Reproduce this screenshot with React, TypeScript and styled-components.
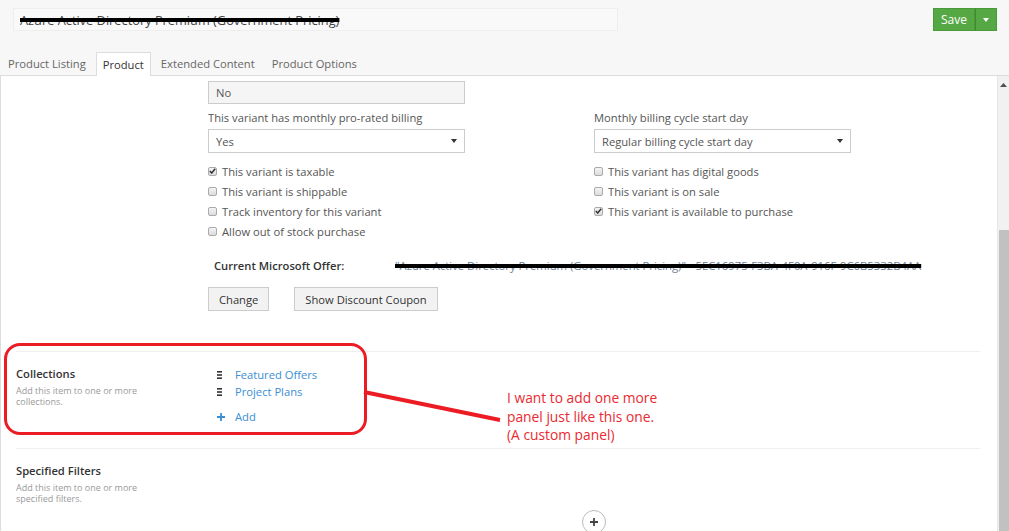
import * as React from "react"
import styled, { createGlobalStyle } from "styled-components"

const GlobalStyle = createGlobalStyle`
  html, body {
    margin: 0;
    padding: 0;
  }
  body {
    font-family: "Open Sans", "Liberation Sans", sans-serif;
    font-size: 11.2px;
    color: #555;
    background: #fff;
    overflow: hidden;
  }
  * {
    box-sizing: border-box;
  }
`

const Page = styled.div`
  width: 1009px;
  height: 531px;
  display: flex;
  flex-direction: column;
  overflow: hidden;
`

const Header = styled.div`
  height: 76px;
  flex: none;
  background: #f7f7f7;
  border-bottom: 1px solid #ddd;
  display: flex;
  flex-direction: column;
`

const TopRow = styled.div`
  display: flex;
  justify-content: space-between;
  padding: 8px 12px 0 13px;
`

const TitleBox = styled.div`
  width: 605px;
  height: 23px;
  background: #f9f9f9;
  border: 1px solid #eee;
  padding: 0 6px;
  display: flex;
  align-items: center;
  font-size: 12.8px;
  color: #444;
`

const Redacted = styled.span`
  text-decoration: line-through;
  text-decoration-color: #000;
  text-decoration-thickness: 4px;
  white-space: nowrap;
`

const SaveGroup = styled.div`
  display: flex;
  height: 23px;
`

const GreenButton = styled.button<{ $narrow?: boolean }>`
  height: 23px;
  width: ${(p) => (p.$narrow ? "22px" : "42px")};
  background: #56a845;
  border: 1px solid #4a9a3a;
  border-left-color: ${(p) => (p.$narrow ? "#3f8a31" : "#4a9a3a")};
  color: #fff;
  font-family: inherit;
  font-size: 12px;
  padding: 0;
  display: flex;
  align-items: center;
  justify-content: center;
`

const Tabs = styled.div`
  display: flex;
  margin-top: 21px;
  padding-left: 1px;
  height: 23px;
`

const Tab = styled.div<{ $active?: boolean }>`
  height: ${(p) => (p.$active ? "24px" : "23px")};
  padding: 0 6px 1px;
  margin-right: 3px;
  display: flex;
  align-items: center;
  color: ${(p) => (p.$active ? "#333" : "#666")};
  background: ${(p) => (p.$active ? "#fff" : "transparent")};
  border: 1px solid ${(p) => (p.$active ? "#ddd" : "transparent")};
  border-bottom: none;
  position: relative;
  z-index: 1;
`

const Body = styled.div`
  flex: 1;
  display: flex;
  min-height: 0;
`

const Main = styled.div`
  flex: 1;
  border-left: 1px solid #ddd;
  padding: 0 17px 0 15px;
  overflow: hidden;
`

const Section = styled.div<{ $divided?: boolean }>`
  position: relative;
  display: grid;
  grid-template-columns: 192px 1fr;
  border-top: 1px solid ${(p) => (p.$divided ? "#efefef" : "transparent")};
`

const SideCell = styled.div`
  padding-top: 13px;
`

const SideTitle = styled.div`
  font-weight: 600;
  color: #333;
  line-height: 17px;
`

const SideDesc = styled.div`
  margin-top: 4px;
  width: 140px;
  font-size: 9px;
  line-height: 10.5px;
  color: #999;
`

const FieldArea = styled.div`
  padding: 4px 0 40px;
`

const TwoCol = styled.div`
  display: grid;
  grid-template-columns: 257px 257px;
  column-gap: 129px;
`

const Label = styled.div`
  margin-top: 5px;
  line-height: 17px;
  color: #555;
`

const InputBox = styled.div<{ $disabled?: boolean }>`
  height: ${(p) => (p.$disabled ? "23px" : "24px")};
  margin-top: ${(p) => (p.$disabled ? "0" : "3px")};
  border: 1px solid #ccc;
  background: ${(p) => (p.$disabled ? "#f5f5f5" : "#fff")};
  padding: 0 7px;
  display: flex;
  align-items: center;
  justify-content: space-between;
  color: #555;
`

const Checks = styled.div`
  margin-top: 8px;
`

const CheckRow = styled.div`
  height: 20px;
  display: flex;
  align-items: center;
  gap: 5px;
  color: #555;
`

const Box = styled.span`
  width: 9px;
  height: 9px;
  border: 1px solid #aaa;
  border-radius: 2px;
  background: linear-gradient(#f4f4f4, #dcdcdc);
  display: flex;
  align-items: center;
  justify-content: center;
`

const OfferRow = styled.div`
  margin-top: 16px;
  padding-left: 6px;
  display: flex;
  line-height: 17px;
`

const OfferLabel = styled.span`
  width: 181px;
  flex: none;
  font-weight: 600;
  color: #333;
`

const OfferValue = styled.span`
  color: #6b7d8f;
  font-size: 11.3px;
  text-decoration: line-through;
  text-decoration-color: #000;
  text-decoration-thickness: 4px;
  white-space: nowrap;
`

const ButtonRow = styled.div`
  margin-top: 13px;
  display: flex;
  gap: 25px;
`

const GrayButton = styled.button`
  height: 24px;
  padding: 0 10px;
  background: #f2f2f2;
  border: 1px solid #ccc;
  font-family: inherit;
  font-size: inherit;
  color: #333;
`

const ListCell = styled.div`
  padding: 14px 0 23px 9px;
`

const ListItem = styled.div<{ $gap?: number }>`
  display: flex;
  align-items: center;
  height: 17px;
  margin-top: ${(p) => p.$gap ?? 0}px;
`

const ItemIcon = styled.span`
  width: 18px;
  display: flex;
  align-items: center;
`

const Link = styled.a`
  color: #3a8ed4;
  text-decoration: none;
`

const CenterCell = styled.div`
  padding-top: 61px;
  display: flex;
  justify-content: center;
`

const RoundButton = styled.div`
  width: 24px;
  height: 24px;
  border-radius: 50%;
  border: 1px solid #bbb;
  background: #fff;
  display: flex;
  align-items: center;
  justify-content: center;
`

const Scrollbar = styled.div`
  width: 12px;
  flex: none;
  background: #f1f1f1;
  border-left: 1px solid #e6e6e6;
  display: flex;
  flex-direction: column;
  padding-top: 7px;
`

const ScrollArrow = styled.div`
  display: flex;
  justify-content: center;
`

const ScrollThumb = styled.div`
  margin-top: 143px;
  margin-left: 1px;
  flex: 1;
  background: #c1c1c1;
`

const CalloutBox = styled.div`
  position: absolute;
  left: -12px;
  top: -9px;
  width: 363px;
  height: 92px;
  border: 3px solid #ec1c24;
  border-radius: 16px;
  pointer-events: none;
`

const CalloutLine = styled.svg`
  position: absolute;
  left: 348px;
  top: 37px;
  overflow: visible;
`

const CalloutText = styled.div`
  position: absolute;
  left: 491px;
  top: 37px;
  font-size: 13.8px;
  line-height: 18.5px;
  color: #ea2a30;
  white-space: nowrap;
`

const Caret = ({ color = "#333" }: { color?: string }) => (
  <svg width="6" height="4" viewBox="0 0 6 4">
    <path d="M0 0 H6 L3 4 Z" fill={color} />
  </svg>
)

const Check = ({ on }: { on?: boolean }) => (
  <Box>
    {on && (
      <svg width="7" height="6" viewBox="0 0 7 6">
        <path d="M0.8 3 L2.7 5 L6.2 0.8" stroke="#333" strokeWidth="1.5" fill="none" />
      </svg>
    )}
  </Box>
)

const Handle = () => (
  <svg width="5" height="8" viewBox="0 0 5 8">
    <rect x="0" y="0" width="5" height="1.6" fill="#333" />
    <rect x="0" y="3.2" width="5" height="1.6" fill="#333" />
    <rect x="0" y="6.4" width="5" height="1.6" fill="#333" />
  </svg>
)

const Plus = ({ color }: { color: string }) => (
  <svg width="8" height="8" viewBox="0 0 8 8">
    <path d="M4 0 V8 M0 4 H8" stroke={color} strokeWidth="1.8" />
  </svg>
)

const leftChecks = [
  { label: "This variant is taxable", on: true },
  { label: "This variant is shippable", on: false },
  { label: "Track inventory for this variant", on: false },
  { label: "Allow out of stock purchase", on: false },
]

const rightChecks = [
  { label: "This variant has digital goods", on: false },
  { label: "This variant is on sale", on: false },
  { label: "This variant is available to purchase", on: true },
]

export default function App() {
  return (
    <Page>
      <GlobalStyle />
      <Header>
        <TopRow>
          <TitleBox>
            <Redacted>Azure Active Directory Premium (Government Pricing)</Redacted>
          </TitleBox>
          <SaveGroup>
            <GreenButton>Save</GreenButton>
            <GreenButton $narrow>
              <Caret color="#fff" />
            </GreenButton>
          </SaveGroup>
        </TopRow>
        <Tabs>
          <Tab>Product Listing</Tab>
          <Tab $active>Product</Tab>
          <Tab>Extended Content</Tab>
          <Tab>Product Options</Tab>
        </Tabs>
      </Header>
      <Body>
        <Main>
          <Section>
            <div />
            <FieldArea>
              <TwoCol>
                <InputBox $disabled>No</InputBox>
                <div />
                <div>
                  <Label>This variant has monthly pro-rated billing</Label>
                  <InputBox>
                    Yes
                    <Caret />
                  </InputBox>
                </div>
                <div>
                  <Label>Monthly billing cycle start day</Label>
                  <InputBox>
                    Regular billing cycle start day
                    <Caret />
                  </InputBox>
                </div>
                <Checks>
                  {leftChecks.map((c) => (
                    <CheckRow key={c.label}>
                      <Check on={c.on} />
                      {c.label}
                    </CheckRow>
                  ))}
                </Checks>
                <Checks>
                  {rightChecks.map((c) => (
                    <CheckRow key={c.label}>
                      <Check on={c.on} />
                      {c.label}
                    </CheckRow>
                  ))}
                </Checks>
              </TwoCol>
              <OfferRow>
                <OfferLabel>Current Microsoft Offer:</OfferLabel>
                <OfferValue>
                  "Azure Active Directory Premium (Government Pricing)" - 5EC16975-F3BA-4F0A-916F-9C6B5332B4AA
                </OfferValue>
              </OfferRow>
              <ButtonRow>
                <GrayButton>Change</GrayButton>
                <GrayButton>Show Discount Coupon</GrayButton>
              </ButtonRow>
            </FieldArea>
          </Section>

          <Section $divided>
            <SideCell>
              <SideTitle>Collections</SideTitle>
              <SideDesc>Add this item to one or more collections.</SideDesc>
            </SideCell>
            <ListCell>
              <ListItem>
                <ItemIcon>
                  <Handle />
                </ItemIcon>
                <Link>Featured Offers</Link>
              </ListItem>
              <ListItem>
                <ItemIcon>
                  <Handle />
                </ItemIcon>
                <Link>Project Plans</Link>
              </ListItem>
              <ListItem $gap={8}>
                <ItemIcon>
                  <Plus color="#3a8ed4" />
                </ItemIcon>
                <Link>Add</Link>
              </ListItem>
            </ListCell>
            <CalloutBox />
            <CalloutLine width="140" height="30">
              <line x1="0" y1="3" x2="136" y2="31" stroke="#ec1c24" strokeWidth="4" />
            </CalloutLine>
            <CalloutText>
              I want to add one more
              <br />
              panel just like this one.
              <br />
              (A custom panel)
            </CalloutText>
          </Section>

          <Section $divided>
            <SideCell>
              <SideTitle>Specified Filters</SideTitle>
              <SideDesc>Add this item to one or more specified filters.</SideDesc>
            </SideCell>
            <CenterCell>
              <RoundButton>
                <Plus color="#444" />
              </RoundButton>
            </CenterCell>
          </Section>
        </Main>
        <Scrollbar>
          <ScrollArrow>
            <svg width="7" height="4" viewBox="0 0 7 4">
              <path d="M0 4 L3.5 0 L7 4 Z" fill="#505050" />
            </svg>
          </ScrollArrow>
          <ScrollThumb />
        </Scrollbar>
      </Body>
    </Page>
  )
}
